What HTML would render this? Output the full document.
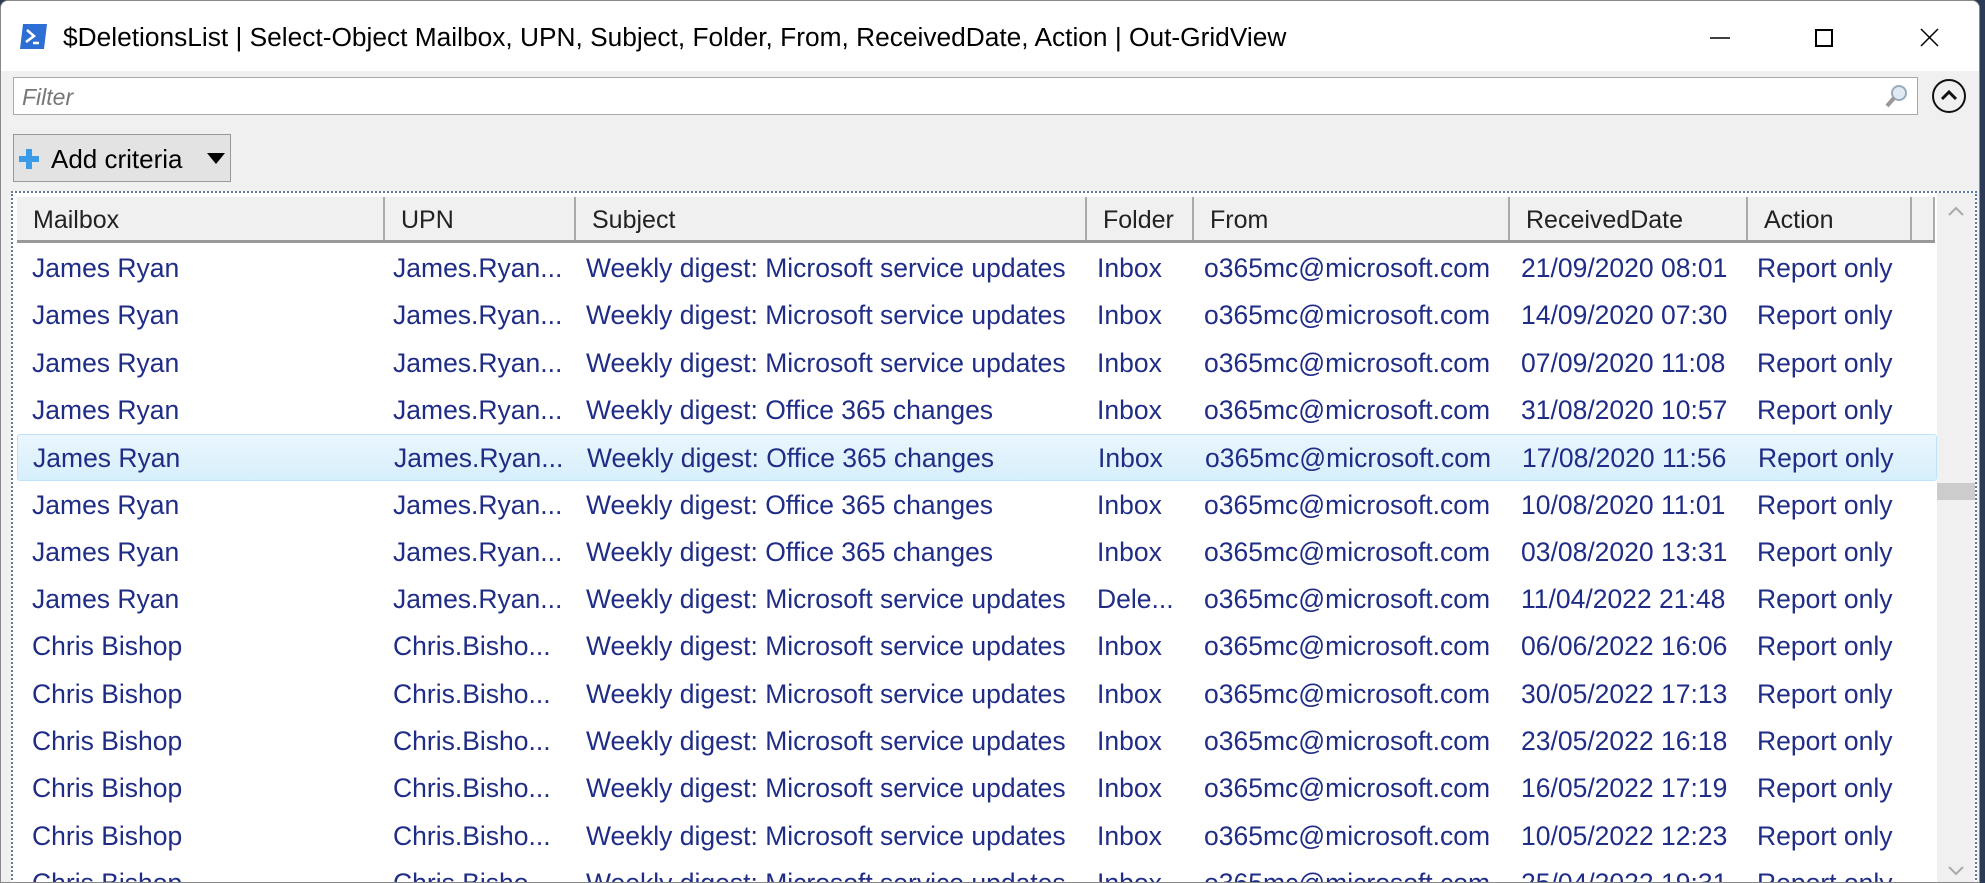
<!DOCTYPE html>
<html><head><style>
*{margin:0;padding:0;box-sizing:border-box}
body{width:1985px;height:883px;overflow:hidden;background:#2b3a55;font-family:"Liberation Sans",sans-serif;position:relative}
.win{position:absolute;left:0;top:0;width:1980px;height:883px;background:#f0f0f0;border:1px solid #888;border-radius:8px 8px 0 0;overflow:hidden}
.title{position:absolute;left:0;top:0;width:100%;height:70px;background:#fff}
.ttext{position:absolute;left:62px;top:21px;font-size:26.3px;color:#000;white-space:nowrap}
.filter{position:absolute;left:12px;top:76px;width:1905px;height:38px;background:#fff;border:1px solid #aaa}
.filter span{position:absolute;left:8px;top:6px;font-size:23px;font-style:italic;color:#777}
.add{position:absolute;left:12px;top:133px;width:218px;height:48px;background:#e3e3e3;border:1px solid #999}
.grid{position:absolute;left:10px;top:190px;width:1966px;height:700px;border:2px dotted #5a7aa0;background:#fff;overflow:hidden}
.hdr{position:absolute;left:4px;top:4px;height:46px;width:1918px;background:#f0f0f0;border-bottom:3px solid #999}
.hc{position:absolute;top:0;height:43px;border-right:2px solid #aaa;font-size:25px;color:#222;padding:9px 0 0 16px;white-space:nowrap}
.row{position:absolute;left:4px;width:1918px;height:47px;font-size:26.5px;color:#1f2d86;white-space:nowrap}
.row span{position:absolute;top:8px}
.sel{background:linear-gradient(#eaf6fd,#d6effc);border:1px solid #bfe3f8;border-radius:3px}
.sb{position:absolute;right:0;top:0;width:38px;height:100%;background:#f0f0f0}
</style></head><body>
<div class="win">
<div class="title">
<svg style="position:absolute;left:19px;top:22px" width="27" height="27" viewBox="0 0 27 27"><path d="M3 1H27L24 26H0Z" fill="#2e6fd6"/><path d="M7 7L14 13L6 19" stroke="#fff" stroke-width="2.5" fill="none"/><path d="M13 20H19" stroke="#fff" stroke-width="2.5"/></svg>
<div class="ttext">$DeletionsList | Select-Object Mailbox, UPN, Subject, Folder, From, ReceivedDate, Action | Out-GridView</div>
<svg style="position:absolute;left:1700px;top:22px" width="260" height="30"><path d="M9 15H29" stroke="#000" stroke-width="1.5"/><path d="M115 7H131V23H115Z" stroke="#000" stroke-width="2" fill="none"/><path d="M220 6L237 23M237 6L220 23" stroke="#000" stroke-width="1.5"/></svg>
</div>
<div class="filter"><span>Filter</span>
<svg style="position:absolute;right:8px;top:5px" width="26" height="26"><circle cx="16" cy="10" r="7" fill="#dfeaf3" stroke="#9ab" stroke-width="2"/><path d="M11 15L4 23" stroke="#999" stroke-width="4"/></svg></div>
<svg style="position:absolute;left:1930px;top:77px" width="36" height="36"><circle cx="18" cy="18" r="16" fill="none" stroke="#111" stroke-width="2"/><path d="M11 21L18 14L25 21" stroke="#111" stroke-width="3" fill="none"/></svg>
<div class="add">
<svg style="position:absolute;left:5px;top:14px" width="20" height="20"><path d="M7 0H13V7H20V13H13V20H7V13H0V7H7Z" fill="#3a9be8"/></svg>
<span style="position:absolute;left:37px;top:9px;font-size:26px;color:#000">Add criteria</span>
<svg style="position:absolute;left:193px;top:18px" width="18" height="12"><path d="M0 0H18L9 11Z" fill="#000"/></svg>
</div>
<div class="grid">
<div class="hdr">
<div class="hc" style="left:0;width:368px">Mailbox</div>
<div class="hc" style="left:368px;width:191px">UPN</div>
<div class="hc" style="left:559px;width:511px">Subject</div>
<div class="hc" style="left:1070px;width:107px">Folder</div>
<div class="hc" style="left:1177px;width:316px">From</div>
<div class="hc" style="left:1493px;width:238px">ReceivedDate</div>
<div class="hc" style="left:1731px;width:164px">Action</div>
<div class="hc" style="left:1895px;width:23px"></div>
</div>
<div class="sb"><svg style="position:absolute;left:10px;top:12px" width="18" height="12"><path d="M2 10L9 3L16 10" stroke="#aaa" stroke-width="2" fill="none"/></svg>
<div style="position:absolute;left:0;top:290px;width:38px;height:17px;background:#ccc"></div>
<svg style="position:absolute;left:10px;top:672px" width="18" height="12"><path d="M2 2L9 9L16 2" stroke="#aaa" stroke-width="2" fill="none"/></svg></div>
<div id="rows"></div>
</div>
</div>
<script>
var d=[["James Ryan","James.Ryan...","Weekly digest: Microsoft service updates","Inbox","21/09/2020 08:01"],
["James Ryan","James.Ryan...","Weekly digest: Microsoft service updates","Inbox","14/09/2020 07:30"],
["James Ryan","James.Ryan...","Weekly digest: Microsoft service updates","Inbox","07/09/2020 11:08"],
["James Ryan","James.Ryan...","Weekly digest: Office 365 changes","Inbox","31/08/2020 10:57"],
["James Ryan","James.Ryan...","Weekly digest: Office 365 changes","Inbox","17/08/2020 11:56"],
["James Ryan","James.Ryan...","Weekly digest: Office 365 changes","Inbox","10/08/2020 11:01"],
["James Ryan","James.Ryan...","Weekly digest: Office 365 changes","Inbox","03/08/2020 13:31"],
["James Ryan","James.Ryan...","Weekly digest: Microsoft service updates","Dele...","11/04/2022 21:48"],
["Chris Bishop","Chris.Bisho...","Weekly digest: Microsoft service updates","Inbox","06/06/2022 16:06"],
["Chris Bishop","Chris.Bisho...","Weekly digest: Microsoft service updates","Inbox","30/05/2022 17:13"],
["Chris Bishop","Chris.Bisho...","Weekly digest: Microsoft service updates","Inbox","23/05/2022 16:18"],
["Chris Bishop","Chris.Bisho...","Weekly digest: Microsoft service updates","Inbox","16/05/2022 17:19"],
["Chris Bishop","Chris.Bisho...","Weekly digest: Microsoft service updates","Inbox","10/05/2022 12:23"],
["Chris Bishop","Chris.Bisho...","Weekly digest: Microsoft service updates","Inbox","25/04/2022 19:31"]];
var h="";
d.forEach(function(r,i){var t=52+i*47.3;
h+='<div class="row'+(i==4?' sel':'')+'" style="top:'+t+'px;'+(i==4?'width:1920px':'')+'"><span style="left:15px">'+r[0]+'</span><span style="left:376px">'+r[1]+'</span><span style="left:569px">'+r[2]+'</span><span style="left:1080px">'+r[3]+'</span><span style="left:1187px">o365mc@microsoft.com</span><span style="left:1504px">'+r[4]+'</span><span style="left:1740px">Report only</span></div>';});
document.getElementById("rows").innerHTML=h;
</script>
</body></html>
